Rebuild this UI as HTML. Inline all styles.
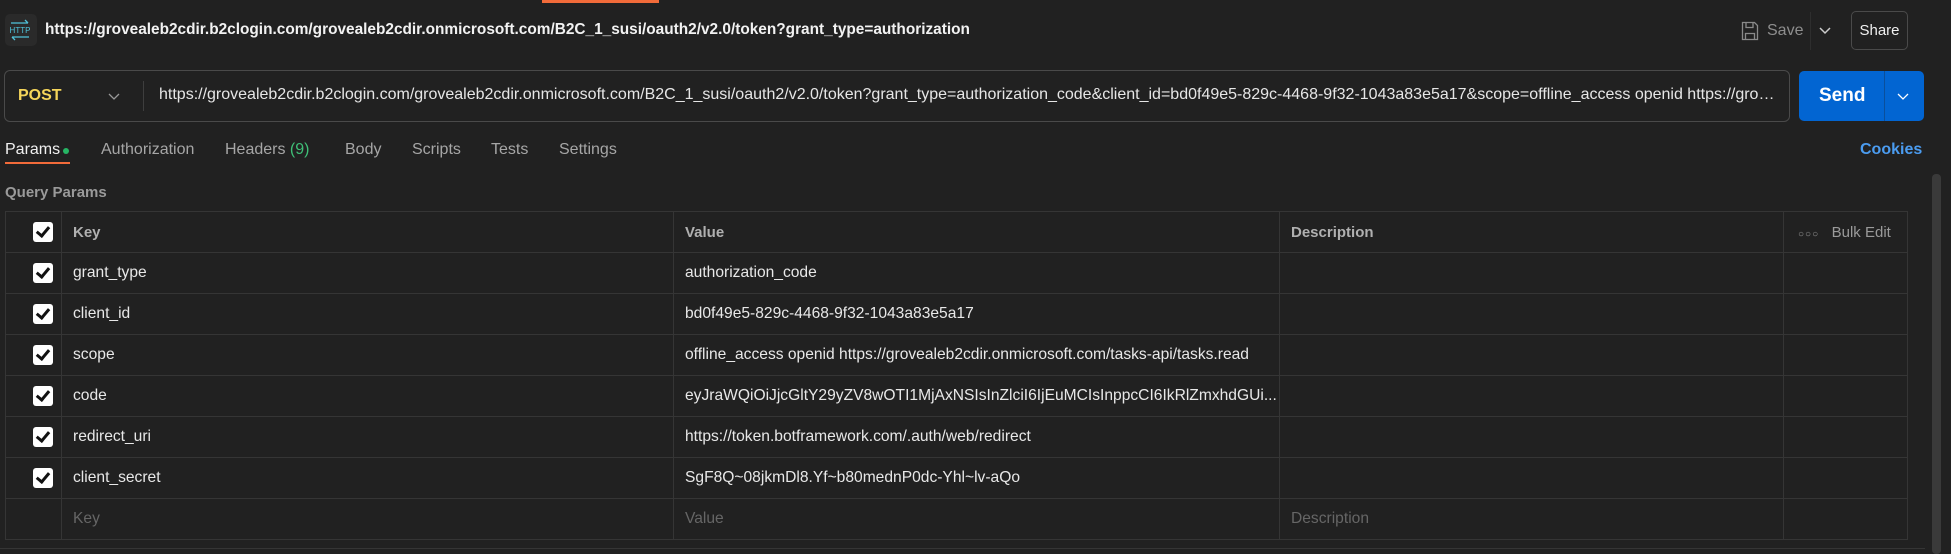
<!DOCTYPE html>
<html><head><meta charset="utf-8"><style>
*{box-sizing:border-box;margin:0;padding:0}
body{width:1951px;height:553px;background:#212121;font-family:"Liberation Sans",sans-serif;color:#e6e6e6;position:relative;overflow:hidden}
.a{position:absolute;white-space:nowrap}
.tab{position:absolute;top:141px;font-size:16px;color:#a6a6a6}
table{position:absolute;left:5px;top:211px;border-collapse:collapse;width:1903px;font-size:15.6px}
td{border:1px solid #353535;height:41px;padding:0 0 0 11px;color:#e8e8e8;white-space:nowrap;overflow:hidden}
tr.h td{color:#b0b0b0;font-weight:bold;font-size:15px}
td.c{width:56px;padding:0 0 0 18px;text-align:center}
.cb{display:inline-block;width:20px;height:20px;background:#fff;border-radius:3px;position:relative;vertical-align:middle}
.cb:after{content:"";position:absolute;left:6px;top:2px;width:5px;height:10px;border:solid #111;border-width:0 3px 3px 0;transform:rotate(40deg)}
.ph td{color:#666}
</style></head><body>
<div class="a" style="left:542px;top:0;width:117px;height:3px;background:#f26b3a"></div>
<div class="a" style="left:5px;top:14px;width:32px;height:32px;border-radius:5px;background:#2a2a2a"></div>
<svg class="a" style="left:8px;top:19px" width="24" height="22" viewBox="0 0 24 22"><path d="M3 4h17M17 1l3 3M4 18h17M4 18l3 3" stroke="#4fc3d9" stroke-width="1.3" fill="none"/><text x="12" y="14" font-size="8" fill="#4fc3d9" text-anchor="middle" font-family="Liberation Sans">HTTP</text></svg>
<div class="a" style="left:45px;top:21px;font-size:15.4px;font-weight:bold;color:#f2f2f2">https://grovealeb2cdir.b2clogin.com/grovealeb2cdir.onmicrosoft.com/B2C_1_susi/oauth2/v2.0/token?grant_type=authorization</div>
<svg class="a" style="left:1741px;top:21px" width="18" height="20" viewBox="0 0 18 20"><path d="M1.5 1.5h12l3 3v14h-15z M5 1.5v5h7v-5 M4.5 18.5v-6h9v6" stroke="#8a8a8a" stroke-width="1.3" fill="none"/></svg>
<div class="a" style="left:1767px;top:22px;font-size:16px;color:#8e8e8e">Save</div>
<div class="a" style="left:1810px;top:12px;width:1px;height:38px;background:#2e2e2e"></div>
<svg class="a" style="left:1819px;top:27px" width="12" height="8"><path d="M1 1l5 5 5-5" stroke="#ccc" stroke-width="1.5" fill="none"/></svg>
<div class="a" style="left:1851px;top:11px;width:57px;height:39px;border:1px solid #4a4a4a;border-radius:5px;font-size:15px;line-height:37px;text-align:center;color:#f0f0f0">Share</div>
<div class="a" style="left:4px;top:70px;width:1786px;height:52px;border:1px solid #4a4a4a;border-radius:6px"></div>
<div class="a" style="left:18px;top:87px;font-size:16px;font-weight:bold;color:#f5d55a">POST</div>
<svg class="a" style="left:108px;top:93px" width="12" height="8"><path d="M1 1l5 5 5-5" stroke="#999" stroke-width="1.3" fill="none"/></svg>
<div class="a" style="left:143px;top:81px;width:1px;height:30px;background:#3e3e3e"></div>
<div class="a" style="left:159px;top:86px;width:1622px;overflow:hidden;text-overflow:ellipsis;font-size:16px;color:#e6e6e6">https://grovealeb2cdir.b2clogin.com/grovealeb2cdir.onmicrosoft.com/B2C_1_susi/oauth2/v2.0/token?grant_type=authorization_code&amp;client_id=bd0f49e5-829c-4468-9f32-1043a83e5a17&amp;scope=offline_access openid https://grovealeb2cdir.onmicrosoft.com/tasks-api</div>
<div class="a" style="left:1799px;top:71px;width:125px;height:50px;background:#0265d2;border-radius:5px"></div>
<div class="a" style="left:1884px;top:71px;width:1px;height:50px;background:#0a4f9c"></div>
<div class="a" style="left:1819px;top:85px;font-size:19px;font-weight:bold;color:#fff">Send</div>
<svg class="a" style="left:1897px;top:93px" width="12" height="8"><path d="M1 1l5 5 5-5" stroke="#fff" stroke-width="1.3" fill="none"/></svg>
<div class="tab" style="left:5px;color:#f0f0f0">Params</div>
<div class="a" style="left:63px;top:148px;width:6px;height:6px;border-radius:50%;background:#26b564"></div>
<div class="a" style="left:5px;top:162px;width:65px;height:2px;background:#f26b3a"></div>
<div class="tab" style="left:101px">Authorization</div>
<div class="tab" style="left:225px">Headers <span style="color:#3fbf77">(9)</span></div>
<div class="tab" style="left:345px">Body</div>
<div class="tab" style="left:412px">Scripts</div>
<div class="tab" style="left:491px">Tests</div>
<div class="tab" style="left:559px">Settings</div>
<div class="tab" style="left:1860px;color:#4b9cf0;font-weight:bold">Cookies</div>
<div class="a" style="left:5px;top:184px;font-size:15px;font-weight:bold;color:#9a9a9a">Query Params</div>
<div class="a" style="left:1932px;top:174px;width:9px;height:380px;background:#3a3a3a;border-radius:4px"></div>
<table>
<tr class="h"><td class="c"><span class="cb"></span></td><td style="width:612px">Key</td><td style="width:606px">Value</td><td style="width:504px">Description</td><td style="color:#9a9a9a;font-weight:normal;padding-left:14px"><span style="letter-spacing:1px;font-size:10px">&#9675;&#9675;&#9675;</span>&nbsp;&nbsp; Bulk Edit</td></tr>
<tr><td class="c"><span class="cb"></span></td><td>grant_type</td><td>authorization_code</td><td></td><td></td></tr>
<tr><td class="c"><span class="cb"></span></td><td>client_id</td><td>bd0f49e5-829c-4468-9f32-1043a83e5a17</td><td></td><td></td></tr>
<tr><td class="c"><span class="cb"></span></td><td>scope</td><td>offline_access openid https://grovealeb2cdir.onmicrosoft.com/tasks-api/tasks.read</td><td></td><td></td></tr>
<tr><td class="c"><span class="cb"></span></td><td>code</td><td>eyJraWQiOiJjcGltY29yZV8wOTI1MjAxNSIsInZlciI6IjEuMCIsInppcCI6IkRlZmxhdGUi...</td><td></td><td></td></tr>
<tr><td class="c"><span class="cb"></span></td><td>redirect_uri</td><td>https://token.botframework.com/.auth/web/redirect</td><td></td><td></td></tr>
<tr><td class="c"><span class="cb"></span></td><td>client_secret</td><td>SgF8Q~08jkmDl8.Yf~b80mednP0dc-Yhl~lv-aQo</td><td></td><td></td></tr>
<tr class="ph"><td class="c"></td><td>Key</td><td>Value</td><td>Description</td><td></td></tr>
</table>
<div class="a" style="left:0;top:548px;width:1925px;height:1px;background:#353535"></div>
</body></html>
